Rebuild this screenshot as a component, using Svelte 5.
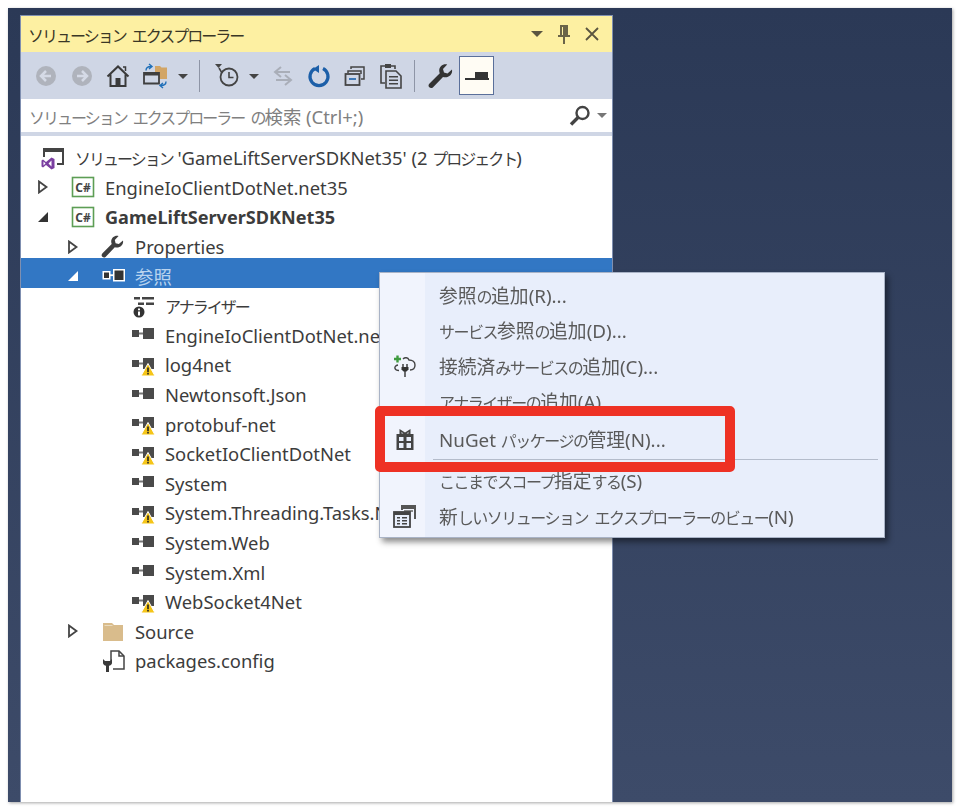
<script>
  // ツリーの行データ (depth: -1 はソリューション行)
  const rows = [
    { label: "ソリューション 'GameLiftServerSDKNet35' (2 プロジェクト)", depth: -1, icon: 'solution' },
    { label: 'EngineIoClientDotNet.net35', depth: 0, icon: 'csharp', arrow: 'closed' },
    { label: 'GameLiftServerSDKNet35', depth: 0, icon: 'csharp', arrow: 'open', bold: true },
    { label: 'Properties', depth: 1, icon: 'wrench', arrow: 'closed' },
    { label: '参照', depth: 1, icon: 'refs', arrow: 'open', selected: true },
    { label: 'アナライザー', depth: 2, icon: 'analyzer' },
    { label: 'EngineIoClientDotNet.net35', depth: 2, icon: 'ref' },
    { label: 'log4net', depth: 2, icon: 'refwarn' },
    { label: 'Newtonsoft.Json', depth: 2, icon: 'ref' },
    { label: 'protobuf-net', depth: 2, icon: 'refwarn' },
    { label: 'SocketIoClientDotNet', depth: 2, icon: 'refwarn' },
    { label: 'System', depth: 2, icon: 'ref' },
    { label: 'System.Threading.Tasks.NET35', depth: 2, icon: 'refwarn' },
    { label: 'System.Web', depth: 2, icon: 'ref' },
    { label: 'System.Xml', depth: 2, icon: 'ref' },
    { label: 'WebSocket4Net', depth: 2, icon: 'refwarn' },
    { label: 'Source', depth: 1, icon: 'folder', arrow: 'closed' },
    { label: 'packages.config', depth: 1, icon: 'config' }
  ];

  const menuTop = [
    { label: '参照の追加(R)...' },
    { label: 'サービス参照の追加(D)...' },
    { label: '接続済みサービスの追加(C)...', icon: 'plug' },
    { label: 'アナライザーの追加(A)...' },
    { label: 'NuGet パッケージの管理(N)...', icon: 'gift' }
  ];
  const menuBottom = [
    { label: 'ここまでスコープ指定する(S)' },
    { label: '新しいソリューション エクスプローラーのビュー(N)', icon: 'views' }
  ];

  // かな文字だけ字幅が狭いので別の span に分ける (奇数番目がかな)
  const chunks = (s) => s.split(/([\u3040-\u30ff]+(?: [\u3040-\u30ff]+)*)/);
</script>

{#snippet jp(text)}
  {#each chunks(text) as part, i}{#if i % 2}<span class="kana">{part}</span>{:else}{part}{/if}{/each}
{/snippet}

{#snippet rowIcon(kind)}
  <svg width="26" height="26" viewBox="0 0 26 26">
    {#if kind === 'solution'}
      <path d="M3 3h21v17h-7v-2h5V7H5v5H3z" fill="#444" />
      <path d="M3 14.500l3 2.500 5.500-4.500 3 1.500v9l-3 1.500L6 20l-3 2.500-1.500-1v-6z" fill="#7a3fa0" />
      <path d="M3.500 16.500v4l2-2zM11.500 15.500l-3 3 3 3z" fill="#fff" />
    {:else if kind === 'csharp'}
      <rect x="2.500" y="3.500" width="21" height="19" fill="#fff" stroke="#5d9e55" stroke-width="1.600" />
      <text x="13" y="17.500" class="cs">C#</text>
    {:else if kind === 'wrench'}
      <path d="M23 6.500l-4.200 3.600-3.200-.8-.8-3.200L18.600 2c-3.600-1-7.400 1.600-7.400 5.600 0 1 .2 1.800.5 2.400L2.500 19.200c-1.200 1.300-1.100 2.600-.2 3.600s2.400 1 3.500-.1l9-9.400c4.300 1.300 9.200-2 8.200-6.800z" fill="#3f3f3f" />
    {:else if kind === 'refs'}
      <rect x="2.500" y="8" width="8" height="8.500" fill="#fff" />
      <rect x="4" y="9.500" width="5" height="5.500" fill="#333" />
      <path d="M10 11.300h3.500v1.800H10z" fill="#fff" />
      <rect x="13" y="6" width="12" height="12.500" fill="#fff" />
      <rect x="14.500" y="7.500" width="9" height="9.500" fill="#333" />
    {:else if kind === 'analyzer'}
      <path d="M4 4h6v2.500H4zM12 4h12v2.500H12zM8 9.500h6V12H8zM16 9.500h8V12h-8z" fill="#444" />
      <circle cx="9" cy="19" r="5.500" fill="#333" />
      <path d="M8 15.500h2v1.800H8zM8 18.500h2v4H8z" fill="#fff" />
    {:else if kind === 'ref' || kind === 'refwarn'}
      <rect x="2" y="8" width="7" height="7" fill="#4a4a4a" />
      <rect x="9" y="10.500" width="4" height="2" fill="#777" />
      <rect x="13" y="6" width="11" height="11" fill="#4a4a4a" />
      {#if kind === 'refwarn'}
        <path d="M18 11.500l7 12.500H11z" fill="#f5c518" stroke="#fff" stroke-width="1" />
        <path d="M17.200 15.500h1.600v4.500h-1.600zM17.200 20.800h1.600v1.600h-1.600z" fill="#222" />
      {/if}
    {:else if kind === 'folder'}
      <path d="M3 5h9l2 2h9v16H3z" fill="#d9bc8c" />
      <path d="M4 8h8l1-1H5z" fill="#eadcc0" />
    {:else if kind === 'config'}
      <path d="M11 14V3h8l5 5v13H13" fill="none" stroke="#444" stroke-width="1.500" />
      <path d="M19 3v5h5" fill="none" stroke="#444" stroke-width="1.500" />
      <path d="M3 11v4c0 1.500 1.500 2.500 3 2.800V24h3v-6.200c1.500-.3 3-1.300 3-2.800v-4l-2 2H5z" fill="#3a3a3a" />
    {/if}
  </svg>
{/snippet}

{#snippet menuIcon(kind)}
  <svg width="26" height="26" viewBox="0 0 26 26">
    {#if kind === 'plug'}
      <path d="M2 6h7M5.500 2.500v7" stroke="#3f9b3f" stroke-width="2.400" />
      <path d="M11 6c2-2 5-1.500 6 1 3.500 0 6 2 6 5s-2 5-5 5M6 12c-2.500 .5-3.500 2-3 3.500s2 2 4 2" fill="none" stroke="#444" stroke-width="1.400" />
      <path d="M11 11v3M15 11v3" stroke="#333" stroke-width="1.400" />
      <path d="M9.500 14h7v2.500l-2 2h-3l-2-2z" fill="#333" />
      <path d="M12.300 18h1.400v6h-1.400z" fill="#333" />
    {:else if kind === 'gift'}
      <path d="M4.500 8h17v16h-17z" fill="#444" />
      <path d="M7 11h4.500v4H7zM14.500 11H19v4h-4.500zM7 17h4.500v5H7zM14.500 17H19v5h-4.500z" fill="#e8eefb" />
      <path d="M7.500 3l5.500 3.500L18.500 3v5h-11z" fill="#444" />
      <path d="M9.500 6l2 1.500h-2zM16.500 6l-2 1.500h2z" fill="#e8eefb" />
    {:else if kind === 'views'}
      <path d="M9 2h15v14h-2V6H11v1H9z" fill="#555" />
      <path d="M12 7h9v2h-9z" fill="#888" />
      <rect x="2" y="9" width="16" height="15" fill="#e8eefb" stroke="#444" stroke-width="1.800" />
      <path d="M2 9h16v3H2z" fill="#444" />
      <path d="M5 14h3v1.500H5zM10 14h5v1.500h-5zM5 17h3v1.500H5zM10 17h5v1.500h-5zM5 20h3v1.500H5zM10 20h5v1.500h-5z" fill="#444" />
    {/if}
  </svg>
{/snippet}

{#snippet caret()}
  <svg class="caret" width="18" height="10" viewBox="0 0 18 10"><path d="M4 3h10l-5 5z" fill="#444" /></svg>
{/snippet}

<div class="page">
  <div class="window">
    <section class="panel">
      <header class="title">
        <span>{@render jp('ソリューション エクスプローラー')}</span>
        <span class="title-btns">
          <svg width="14" height="10" viewBox="0 0 14 10"><path d="M1 2h12L7 8z" fill="#5a5540" /></svg>
          <svg width="14" height="22" viewBox="0 0 14 22"><path d="M3 2h8v10h2v2H8v7H6v-7H1v-2h2zM5 4v8h1V4z" fill="#6a6448" /></svg>
          <svg width="16" height="16" viewBox="0 0 16 16"><path d="M2 2l12 12M14 2L2 14" stroke="#5a5540" stroke-width="1.800" /></svg>
        </span>
      </header>

      <div class="toolbar">
        <span class="tb">
          <svg width="22" height="22" viewBox="0 0 22 22"><circle cx="11" cy="11" r="10" fill="#afb3bc" /><path d="M11 6l-5 5 5 5M6 11h10" fill="none" stroke="#d5dae6" stroke-width="2.500" /></svg>
        </span>
        <span class="tb">
          <svg width="22" height="22" viewBox="0 0 22 22"><circle cx="11" cy="11" r="10" fill="#afb3bc" /><path d="M11 6l5 5-5 5M16 11H6" fill="none" stroke="#d5dae6" stroke-width="2.500" /></svg>
        </span>
        <span class="tb">
          <svg width="24" height="24" viewBox="0 0 24 24"><path d="M1.500 12.500L12 2.500l10.500 10M4.500 10.500V22h15V10.500" fill="none" stroke="#3a3a3a" stroke-width="2" /><path d="M9.500 14h5v8h-5z" fill="#3a3a3a" /><path d="M17 3h2.500v4" fill="none" stroke="#3a3a3a" stroke-width="1.500" /></svg>
        </span>
        <span class="tb tb-wide">
          <svg width="26" height="26" viewBox="0 0 26 26"><path d="M13 3h5l1.500 1.500H25V16H13z" fill="#d2a566" /><path d="M2 10h15v10.500H2z" fill="#cfd6e5" stroke="#3f3f3f" stroke-width="1.800" /><path d="M2 10h15v2.500H2z" fill="#3f3f3f" /><path d="M4 7.500c0-3 1.500-4 5-4M7 1l3 2.500L7 6" fill="none" stroke="#1f6fb8" stroke-width="1.400" /><path d="M24 18.500c0 3-1.500 4-5 4M21 20l-3 2.500 3 2.500" fill="none" stroke="#1f6fb8" stroke-width="1.400" /></svg>
        </span>
        {@render caret()}
        <i class="sep"></i>
        <span class="tb">
          <svg width="26" height="26" viewBox="0 0 26 26"><path d="M1 1h7L4.500 5z" fill="#444" /><circle cx="15" cy="14" r="8.500" fill="none" stroke="#444" stroke-width="1.800" /><path d="M15 9v5.500h4.500" fill="none" stroke="#444" stroke-width="1.600" /><path d="M5 5l3 5" stroke="#444" stroke-width="1.500" /></svg>
        </span>
        {@render caret()}
        <span class="tb tb-sync">
          <svg width="22" height="22" viewBox="0 0 22 22"><path d="M9 2L3 7l6 5M3 7h15M13 10l6 5-6 5M19 15H4" fill="none" stroke="#a9aeb8" stroke-width="2" /></svg>
        </span>
        <span class="tb">
          <svg width="24" height="24" viewBox="0 0 24 24"><path d="M8 4.500a9 9 0 1 0 8 0" fill="none" stroke="#1c5fa8" stroke-width="3.200" /><path d="M12 1v8L6 5z" fill="#1c5fa8" /></svg>
        </span>
        <span class="tb">
          <svg width="22" height="22" viewBox="0 0 22 22"><path d="M7 4V2h13v12h-3M4 8V6h13v3" fill="none" stroke="#444" stroke-width="1.500" /><rect x="1.500" y="9" width="14" height="11" fill="none" stroke="#444" stroke-width="1.800" /><path d="M5 14h7" stroke="#2c6cb0" stroke-width="1.800" /></svg>
        </span>
        <span class="tb">
          <svg width="26" height="26" viewBox="0 0 26 26"><path d="M7 20H3V3h14v3" fill="none" stroke="#444" stroke-width="1.600" /><path d="M8 8h10l5 5v12H8z" fill="none" stroke="#444" stroke-width="1.600" /><path d="M7 1h6v4H7z" fill="#444" /><path d="M11 13h9v1.600h-9zM11 16.500h9v1.600h-9zM11 20h9v1.600h-9z" fill="#444" /></svg>
        </span>
        <i class="sep sep2"></i>
        <span class="tb tb-tool">
          <svg width="26" height="26" viewBox="0 0 26 26"><path d="M25 6.500l-4.500 4-3.500-1-1-3.500L20.200 1.500c-4-1-8 1.800-8 6 0 1 .2 2 .6 2.800L2.500 20.500c-1.300 1.400-1.200 2.800-.2 3.800s2.600 1 3.800-.1L16 14c4.700 1.500 10-2 9-7.500z" fill="#333" /></svg>
        </span>
        <span class="tb-active">
          <svg width="26" height="10" viewBox="0 0 26 10"><path d="M1 7h24v2H1z" fill="#333" /><path d="M11 1h13v6H11z" fill="#333" /></svg>
        </span>
      </div>

      <div class="search">
        <span class="search-text">{@render jp('ソリューション エクスプローラー の検索 (Ctrl+;)')}</span>
        <svg width="24" height="24" viewBox="0 0 24 24"><circle cx="14.500" cy="9" r="6" fill="none" stroke="#444" stroke-width="2.400" /><path d="M10 13.500l-7 7" stroke="#444" stroke-width="3.400" /></svg>
        <svg class="search-caret" width="10" height="6" viewBox="0 0 10 6"><path d="M0 0h10L5 5z" fill="#777" /></svg>
      </div>

      <ul class="tree">
        {#each rows as row}
          <li class="row" class:selected={row.selected} class:bold={row.bold} style="padding-left: {30 * (row.depth + 1)}px">
            <span class="arrow">
              {#if row.arrow === 'closed'}
                <svg width="12" height="14" viewBox="0 0 12 14"><path d="M2 1.500L9.500 7 2 12.500z" fill="#fff" stroke="#444" stroke-width="1.800" /></svg>
              {:else if row.arrow === 'open'}
                <svg width="12" height="12" viewBox="0 0 12 12"><path d="M11 1v10H1z" fill={row.selected ? '#fff' : '#333'} /></svg>
              {/if}
            </span>
            <span class="icon">{@render rowIcon(row.icon)}</span>
            <span class="label">{@render jp(row.label)}</span>
          </li>
        {/each}
      </ul>
    </section>

    <nav class="menu">
      {#each menuTop as item}
        <div class="item">
          <span class="item-icon">{#if item.icon}{@render menuIcon(item.icon)}{/if}</span>
          <span>{@render jp(item.label)}</span>
        </div>
      {/each}
      <hr class="menu-sep" />
      {#each menuBottom as item}
        <div class="item">
          <span class="item-icon">{#if item.icon}{@render menuIcon(item.icon)}{/if}</span>
          <span>{@render jp(item.label)}</span>
        </div>
      {/each}
    </nav>

    <div class="highlight"></div>
  </div>
</div>

<style>
  :global(body) {
    background: #fff;
  }

  .page {
    height: 810px;
    box-sizing: border-box;
    padding: 8px;
    overflow: hidden;
    font-family: "Noto Sans", "Noto Sans CJK JP", sans-serif;
    font-size: 18.4px;
    color: #3c3c3c;
  }

  .window {
    position: relative;
    height: 794px;
    box-sizing: border-box;
    padding: 7px 0 0 12px;
    background: linear-gradient(#2b3956, #3d4b69);
    box-shadow: 1px 1px 3px rgba(0, 0, 0, 0.35);
    filter: blur(0.55px);
  }

  .panel {
    display: flex;
    flex-direction: column;
    width: 593px;
    height: 787px;
    box-sizing: border-box;
    border: 1px solid #7f8fb0;
    border-bottom: 0;
    background: #cfd6e5;
  }

  .kana {
    font-size: 16px;
    letter-spacing: -2px;
    word-spacing: 4px;
  }

  .title {
    display: flex;
    align-items: center;
    justify-content: space-between;
    height: 36px;
    flex: none;
    padding: 0 12px 0 7px;
    background: #fdf0a2;
    color: #3a3726;
  }

  .title-btns {
    display: flex;
    align-items: center;
    gap: 13px;
  }

  .toolbar {
    display: flex;
    align-items: center;
    height: 47px;
    flex: none;
    padding-left: 7px;
  }

  .tb {
    display: flex;
    justify-content: center;
    width: 36px;
    flex: none;
  }

  .tb-wide {
    width: 38px;
  }

  .tb-sync {
    margin-left: 2px;
  }

  .tb-tool {
    margin-left: 7px;
  }

  .caret {
    flex: none;
  }

  .sep {
    width: 1px;
    height: 32px;
    margin: 0 9px 0 7px;
    background: #8e95a6;
    flex: none;
  }

  .sep2 {
    margin: 0 0 0 5px;
  }

  .tb-active {
    display: flex;
    align-items: center;
    justify-content: center;
    width: 33px;
    height: 37px;
    margin-left: 1px;
    background: #fffcf4;
    border: 1px solid #5a6f9a;
    flex: none;
  }

  .search {
    display: flex;
    align-items: center;
    height: 33px;
    flex: none;
    padding: 0 5px 0 8px;
    background: #fff;
  }

  .search-text {
    flex: 1;
    color: #808080;
  }

  .search-caret {
    margin-left: 5px;
  }

  .tree {
    flex: 1;
    margin: 4px 0 0;
    padding: 7px 0 0;
    list-style: none;
    background: #fff;
    overflow: hidden;
  }

  .row {
    display: flex;
    align-items: center;
    height: 29.6px;
    white-space: nowrap;
  }

  .row.selected {
    background: linear-gradient(#3277c4 27px, transparent 27px);
    box-shadow: 0 -3px 0 #3277c4;
    color: #b9d3ee;
  }

  .row.bold {
    font-weight: 700;
    font-size: 18.1px;
  }

  .arrow {
    display: flex;
    align-items: center;
    justify-content: center;
    width: 20px;
    margin-left: -18px;
    margin-right: 17px;
    flex: none;
  }

  .icon {
    display: flex;
    width: 26px;
    margin-right: 9px;
    flex: none;
  }

  /* 右クリックメニュー */
  .menu {
    position: absolute;
    left: 371px;
    top: 264px;
    width: 506px;
    height: 266px;
    box-sizing: border-box;
    padding-top: 4px;
    font-size: 18.8px;
    background: linear-gradient(90deg, #f1f4fd 45px, #e8eefb 45px);
    border: 1px solid #a9b3c6;
    box-shadow: 3px 4px 6px rgba(0, 0, 0, 0.45);
    color: #5a5a5a;
  }

  .menu .kana {
    letter-spacing: -1.5px;
  }

  .item {
    display: flex;
    align-items: center;
    height: 35.5px;
    white-space: nowrap;
  }

  .item:nth-child(5) {
    margin-top: 2px;
  }

  .item-icon {
    display: flex;
    justify-content: center;
    width: 49px;
    margin-right: 10px;
    flex: none;
  }

  .menu-sep {
    height: 1px;
    margin: 2px 6px 3px 53px;
    border: 0;
    background: #b4bccb;
  }

  /* 注釈の赤枠 */
  .highlight {
    position: absolute;
    left: 367px;
    top: 398px;
    width: 360px;
    height: 66px;
    box-sizing: border-box;
    border: 10px solid #ee3124;
    border-radius: 5px;
  }

  :global(.cs) {
    font-family: "Noto Sans", sans-serif;
    font-size: 12px;
    font-weight: 700;
    fill: #444;
    text-anchor: middle;
  }
</style>
